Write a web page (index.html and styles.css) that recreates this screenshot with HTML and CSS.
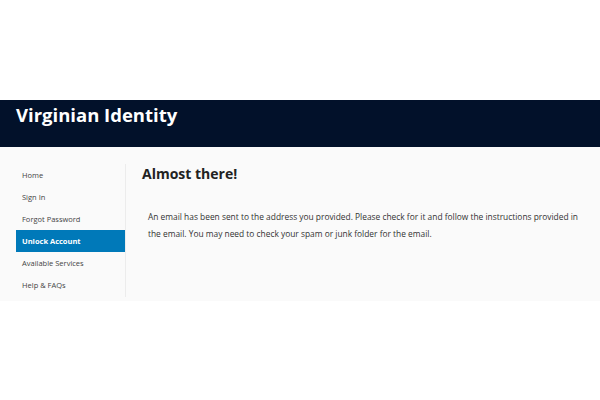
FILE: index.html
```html
<!DOCTYPE html>
<html lang="en">
<head>
  <meta charset="UTF-8" />
  <title>Virginian Identity - Almost there</title>
  <link rel="stylesheet" href="styles.css">
</head>
<body>

  <div class="topo"></div>

  <!-- CABECALHO -->
  <header class="cabecalho">
    <div class="titulo-app">Virginian Identity</div>
  </header>

  <!-- CONTEUDO -->
  <div class="principal">
    <nav class="menu">
      <a href="#">Home</a>
      <a href="#">Sign In</a>
      <a href="#">Forgot Password</a>
      <a href="#" class="ativo">Unlock Account</a>
      <a href="#">Available Services</a>
      <a href="#">Help &amp; FAQs</a>
    </nav>
    <div class="conteudo">
      <h2>Almost there!</h2>
      <p class="mensagem">An email has been sent to the address you provided. Please check for it and follow the instructions provided in the email. You may need to check your spam or junk folder for the email.</p>
    </div>
  </div>

</body>
</html>
```

FILE: styles.css
```css
body {
  margin: 0;
  padding: 0;
  font-family: 'Open Sans', 'Noto Sans', sans-serif;
  background: white;
  color: #333;
}

.topo {
  height: 100px;
}

.cabecalho {
  background: #02112a;
  height: 47px;
  padding-left: 16px;
  box-sizing: border-box;
}

.titulo-app {
  color: white;
  font-size: 18.5px;
  font-weight: bold;
  line-height: 30px;
}

.principal {
  background: #fafafa;
  display: flex;
  padding: 17px 16px 4px 16px;
  height: 154px;
  box-sizing: border-box;
}

.menu {
  width: 109px;
  border-right: 1px solid #ececec;
  display: flex;
  flex-direction: column;
}

.menu a {
  height: 22px;
  line-height: 22px;
  padding-left: 6px;
  font-size: 7.5px;
  color: #444;
  text-decoration: none;
}

.menu a.ativo {
  background: #0079b9;
  color: white;
  font-weight: bold;
}

.conteudo {
  flex: 1;
  padding-left: 16px;
}

h2 {
  font-size: 14px;
  font-weight: bold;
  margin: 0;
  line-height: 20px;
  color: #222;
}

.mensagem {
  font-size: 8.4px;
  line-height: 17px;
  margin: 24px 0 0 6px;
  color: #333;
}
```
